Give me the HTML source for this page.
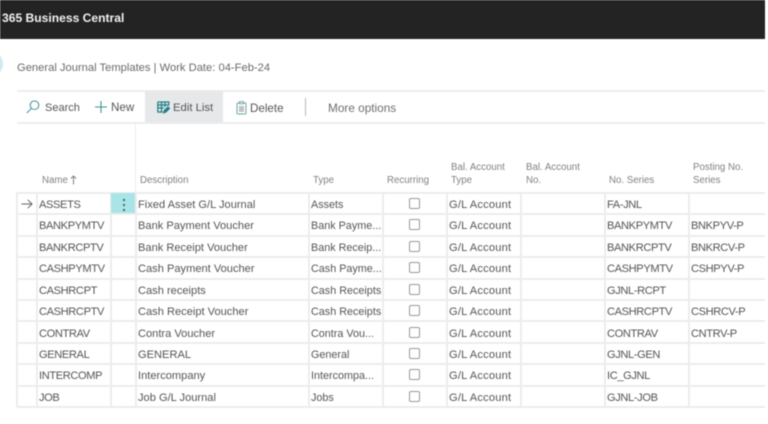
<!DOCTYPE html>
<html><head><meta charset="utf-8"><style>
html,body{margin:0;padding:0;background:#fff}
body{width:768px;height:424px;overflow:hidden;position:relative;font-family:"Liberation Sans",sans-serif;color:#555}
#w{position:absolute;left:0;top:0;width:768px;height:424px;filter:blur(.45px)}
.a{position:absolute;white-space:nowrap}
.hl{position:absolute;left:17px;width:748px;height:2px;background:#eceded}
.vl{position:absolute;top:192px;width:2px;height:215px;background:#eceded}
.r{position:absolute;left:0;width:765px;height:21px;line-height:23px;font-size:11.1px;color:#555}
.r span{position:absolute;top:1px;white-space:nowrap}
.n,.s,.p{letter-spacing:-.38px}
.n{left:39px}.d{left:138px}.t{left:311px;font-size:10.8px}.g{left:449px;letter-spacing:.2px}.s{left:607px}.p{left:691px}
.r i{position:absolute;left:409px;top:5px;width:9px;height:9px;border:1.5px solid #999;border-radius:2px;background:#fff}
.h{position:absolute;font-size:9.7px;line-height:13px;color:#808080;white-space:nowrap}
.tb{position:absolute;top:100px;font-size:11.3px;line-height:16px;color:#555;white-space:nowrap}
</style></head><body><div id="w">
<div class="a" style="left:0;top:0;width:765px;height:39px;background:#232323"></div>
<div class="a" style="left:2px;top:10px;font-size:12.1px;line-height:17px;font-weight:bold;color:#f2f2f2">365 Business Central</div>
<div class="a" style="left:-8px;top:55px;width:11px;height:18px;border-radius:50%;background:#cfeaf0"></div>
<div class="a" style="left:17px;top:60px;font-size:11.2px;line-height:16px;color:#6a6a6a">General Journal Templates | Work Date: 04-Feb-24</div>

<div class="hl" style="top:90px"></div>
<div class="hl" style="top:122px"></div>
<div class="a" style="left:145px;top:91px;width:78px;height:31px;background:#e6e8ea"></div>
<div class="a" style="left:305px;top:98px;width:1px;height:18px;background:#b8b8b8"></div>
<div class="a" style="left:135px;top:123px;width:1px;height:70px;background:#eceded"></div>

<svg class="a" style="left:25px;top:99px" width="16" height="16" viewBox="0 0 16 16" fill="none" stroke="#4f9a9c" stroke-width="1.1"><circle cx="9.5" cy="6.2" r="4.3"/><path d="M6.4 9.4 1.8 14"/></svg>
<div class="tb" style="left:45px;font-size:11px">Search</div>
<svg class="a" style="left:94px;top:100px" width="14" height="14" viewBox="0 0 14 14" fill="none" stroke="#3f9496" stroke-width="1.1"><path d="M7 1v12M1 7h12"/></svg>
<div class="tb" style="left:111px;font-size:11.6px">New</div>
<svg class="a" style="left:157px;top:101px" width="13" height="13" viewBox="0 0 13 13" fill="none" stroke="#1f7f86" stroke-width="1.2"><path d="M.8 1h11v3.5M.8 1v10h5M.8 4h11M.8 7h6M4.5 1v10M8 1v5"/><path d="M6.8 11.8 7.3 9.5 11 6l1.5 1.4L8.900 11z" fill="#1f7f86"/></svg>
<div class="tb" style="left:173px">Edit List</div>
<svg class="a" style="left:236px;top:101px" width="11" height="14" viewBox="0 0 11 14" fill="none" stroke="#6fa3a4" stroke-width="1"><rect x="1" y="2" width="9" height="11" rx="1"/><rect x="3.500" y=".7" width="4" height="2" fill="#fff"/><path d="M3.800 5v6M5.500 5v6M7.200 5v6" stroke="#9a9a9a"/></svg>
<div class="tb" style="left:250px;top:101px;font-size:11.6px">Delete</div>
<div class="tb" style="left:328px;color:#6e6e6e;font-size:11.8px">More options</div>

<div class="h" style="left:42px;top:174px">Name</div>
<svg class="a" style="left:70px;top:175px" width="7" height="10" viewBox="0 0 7 10" fill="none" stroke="#808080" stroke-width="1"><path d="M3.500 9.500V1M.8 3.500 3.500 1l2.700 2.500"/></svg>
<div class="h" style="left:140px;top:174px">Description</div>
<div class="h" style="left:313px;top:174px">Type</div>
<div class="h" style="left:387px;top:174px">Recurring</div>
<div class="h" style="left:451px;top:161px">Bal. Account<br>Type</div>
<div class="h" style="left:526px;top:161px">Bal. Account<br>No.</div>
<div class="h" style="left:609px;top:174px">No. Series</div>
<div class="h" style="left:693px;top:161px">Posting No.<br>Series</div>

<div class="hl" style="top:192px"></div>
<div class="hl" style="top:213px"></div>
<div class="hl" style="top:235px"></div>
<div class="hl" style="top:256px"></div>
<div class="hl" style="top:278px"></div>
<div class="hl" style="top:299px"></div>
<div class="hl" style="top:320px"></div>
<div class="hl" style="top:342px"></div>
<div class="hl" style="top:363px"></div>
<div class="hl" style="top:385px"></div>
<div class="hl" style="top:406px"></div>
<div class="vl" style="left:16px"></div>
<div class="vl" style="left:36px"></div>
<div class="vl" style="left:110px"></div>
<div class="vl" style="left:135px"></div>
<div class="vl" style="left:308px"></div>
<div class="vl" style="left:382px"></div>
<div class="vl" style="left:446px"></div>
<div class="vl" style="left:520px"></div>
<div class="vl" style="left:604px"></div>
<div class="vl" style="left:688px"></div>

<div class="a" style="left:111px;top:193px;width:24px;height:20px;background:#a9e4e6"></div>
<div class="a" style="left:122.500px;top:198.500px;width:2px;height:2px;background:#3f6a6c;box-shadow:0 5px #3f6a6c,0 10px #3f6a6c"></div>
<svg class="a" style="left:21px;top:198px" width="12" height="12" viewBox="0 0 12 12" fill="none" stroke="#666" stroke-width="1"><path d="M.5 6h10.500M6.800 1.800 11 6l-4.200 4.200"/></svg>

<div class="r" style="top:193px"><span class="n">ASSETS</span><span class="d">Fixed Asset G/L Journal</span><span class="t">Assets</span><i></i><span class="g">G/L Account</span><span class="s">FA-JNL</span></div>
<div class="r" style="top:214px"><span class="n">BANKPYMTV</span><span class="d">Bank Payment Voucher</span><span class="t">Bank Payme...</span><i></i><span class="g">G/L Account</span><span class="s">BANKPYMTV</span><span class="p">BNKPYV-P</span></div>
<div class="r" style="top:236px"><span class="n">BANKRCPTV</span><span class="d">Bank Receipt Voucher</span><span class="t">Bank Receip...</span><i></i><span class="g">G/L Account</span><span class="s">BANKRCPTV</span><span class="p">BNKRCV-P</span></div>
<div class="r" style="top:257px"><span class="n">CASHPYMTV</span><span class="d">Cash Payment Voucher</span><span class="t">Cash Payme...</span><i></i><span class="g">G/L Account</span><span class="s">CASHPYMTV</span><span class="p">CSHPYV-P</span></div>
<div class="r" style="top:279px"><span class="n">CASHRCPT</span><span class="d">Cash receipts</span><span class="t">Cash Receipts</span><i></i><span class="g">G/L Account</span><span class="s">GJNL-RCPT</span></div>
<div class="r" style="top:300px"><span class="n">CASHRCPTV</span><span class="d">Cash Receipt Voucher</span><span class="t">Cash Receipts</span><i></i><span class="g">G/L Account</span><span class="s">CASHRCPTV</span><span class="p">CSHRCV-P</span></div>
<div class="r" style="top:322px"><span class="n">CONTRAV</span><span class="d">Contra Voucher</span><span class="t">Contra Vou...</span><i></i><span class="g">G/L Account</span><span class="s">CONTRAV</span><span class="p">CNTRV-P</span></div>
<div class="r" style="top:343px"><span class="n">GENERAL</span><span class="d">GENERAL</span><span class="t">General</span><i></i><span class="g">G/L Account</span><span class="s">GJNL-GEN</span></div>
<div class="r" style="top:364px"><span class="n">INTERCOMP</span><span class="d">Intercompany</span><span class="t">Intercompa...</span><i></i><span class="g">G/L Account</span><span class="s">IC_GJNL</span></div>
<div class="r" style="top:386px"><span class="n">JOB</span><span class="d">Job G/L Journal</span><span class="t">Jobs</span><i></i><span class="g">G/L Account</span><span class="s">GJNL-JOB</span></div>
</div></body></html>
